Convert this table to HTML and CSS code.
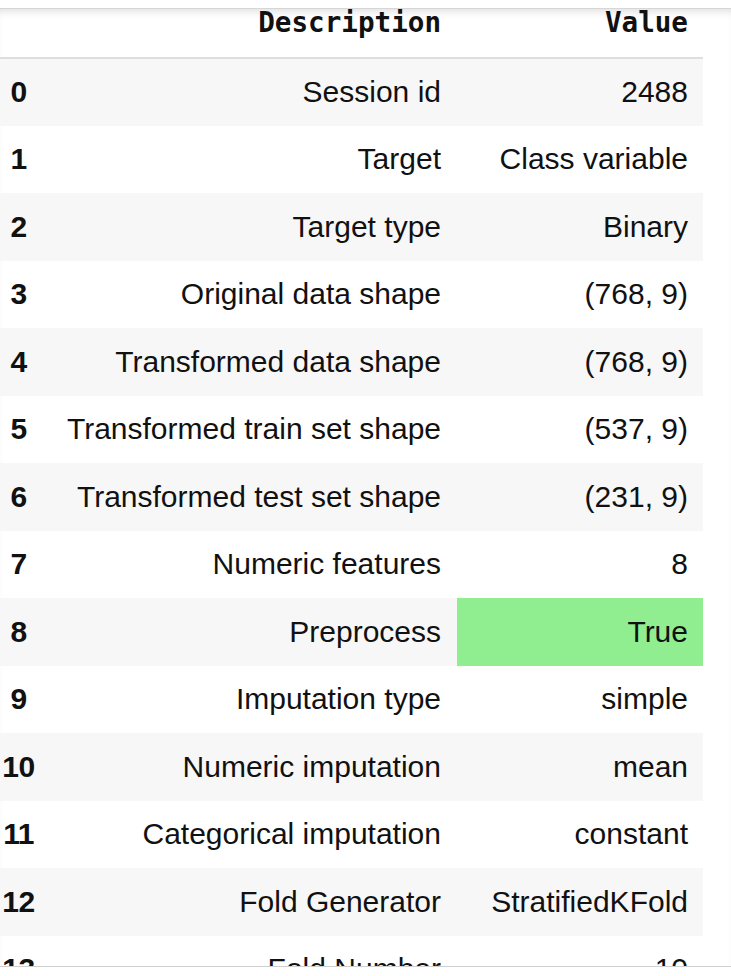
FILE: index.html
```html
<!DOCTYPE html>
<html>
<head>
<meta charset="utf-8">
<link rel="stylesheet" href="styles.css">
</head>
<body>
<div class="frame">
  <table class="df">
    <thead>
      <tr class="head">
        <th class="idx"></th>
        <th class="desc">Description</th>
        <th class="val">Value</th>
      </tr>
    </thead>
    <tbody>
      <tr><th class="idx">0</th><td class="desc">Session id</td><td class="val">2488</td></tr>
      <tr><th class="idx">1</th><td class="desc">Target</td><td class="val">Class variable</td></tr>
      <tr><th class="idx">2</th><td class="desc">Target type</td><td class="val">Binary</td></tr>
      <tr><th class="idx">3</th><td class="desc">Original data shape</td><td class="val">(768, 9)</td></tr>
      <tr><th class="idx">4</th><td class="desc">Transformed data shape</td><td class="val">(768, 9)</td></tr>
      <tr><th class="idx">5</th><td class="desc">Transformed train set shape</td><td class="val">(537, 9)</td></tr>
      <tr><th class="idx">6</th><td class="desc">Transformed test set shape</td><td class="val">(231, 9)</td></tr>
      <tr><th class="idx">7</th><td class="desc">Numeric features</td><td class="val">8</td></tr>
      <tr><th class="idx">8</th><td class="desc">Preprocess</td><td class="val hl">True</td></tr>
      <tr><th class="idx">9</th><td class="desc">Imputation type</td><td class="val">simple</td></tr>
      <tr><th class="idx">10</th><td class="desc">Numeric imputation</td><td class="val">mean</td></tr>
      <tr><th class="idx">11</th><td class="desc">Categorical imputation</td><td class="val">constant</td></tr>
      <tr><th class="idx">12</th><td class="desc">Fold Generator</td><td class="val">StratifiedKFold</td></tr>
      <tr><th class="idx">13</th><td class="desc">Fold Number</td><td class="val">10</td></tr>
    </tbody>
  </table>
</div>
</body>
</html>
```

FILE: styles.css
```css
html, body {
  margin: 0;
  padding: 0;
  background: #ffffff;
}

body {
  padding-top: 8px;
  height: 968px;
  overflow: hidden;
}

.frame {
  height: 957px;
  overflow: hidden;
  border-top: 1px solid #d6d6d6;
  border-bottom: 1px solid #cfcfcf;
  box-shadow: inset 0 7px 8px -5px rgba(0, 0, 0, 0.14);
  background: #ffffff;
}

.df {
  border-collapse: collapse;
  border-spacing: 0;
  table-layout: fixed;
  width: 703px;
  font-family: "Liberation Sans", Arial, sans-serif;
  font-size: 30px;
  color: #111111;
}

.df th, .df td {
  padding: 0;
  white-space: nowrap;
  overflow: visible;
}

.idx {
  width: 37px;
  text-align: center;
  font-weight: bold;
  letter-spacing: -0.5px;
}

.desc {
  width: 404px;
  padding-right: 16px !important;
  text-align: right;
}

.val {
  width: 231px;
  padding-right: 15px !important;
  text-align: right;
}

.head th {
  height: 48px;
  vertical-align: top;
  font-family: "DejaVu Sans Mono", "Liberation Mono", monospace;
  font-size: 27.6px;
  font-weight: bold;
  line-height: 28px;
  letter-spacing: 0;
  border-bottom: 2px solid #dedede;
}

tbody tr {
  height: 67.5px;
}

tbody th, tbody td {
  vertical-align: middle;
  line-height: 34px;
}

tbody tr:nth-child(odd) {
  background: #f7f7f7;
}

.hl {
  background: #90ee90;
}
```
